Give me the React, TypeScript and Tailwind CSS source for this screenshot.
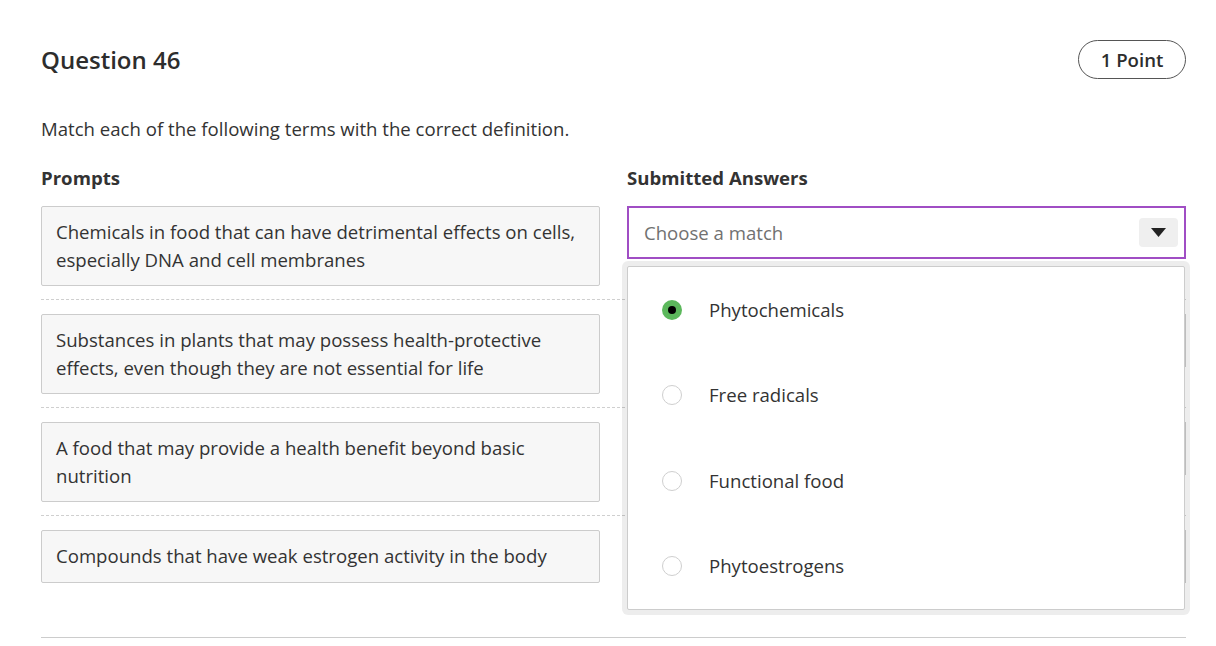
const prompts = [
  'Chemicals in food that can have detrimental effects on cells, especially DNA and cell membranes',
  'Substances in plants that may possess health-protective effects, even though they are not essential for life',
  'A food that may provide a health benefit beyond basic nutrition',
  'Compounds that have weak estrogen activity in the body',
]

const options = ['Phytochemicals', 'Free radicals', 'Functional food', 'Phytoestrogens']

function Arrow() {
  return (
    <span className="flex h-[29px] w-[39px] items-center justify-center rounded-sm bg-[#efefef]">
      <svg width="15" height="9" viewBox="0 0 15 9">
        <path d="M0 0 L15 0 L7.5 9 Z" fill="#222" />
      </svg>
    </span>
  )
}

function Select({ active, open }: { active?: boolean; open?: boolean }) {
  return (
    <div className="relative">
      <div
        className={
          active
            ? 'flex h-[53px] items-center justify-between border-2 border-[#a04ec4] bg-white pl-[15px] pr-[6px]'
            : 'flex h-[53px] items-center justify-between border border-[#cccccc] bg-white pl-[16px] pr-[7px]'
        }
      >
        <span className="text-[18.6px] text-[#717171]">Choose a match</span>
        <Arrow />
      </div>
      {open && (
        <div className="absolute left-0 right-[1px] top-[calc(100%+7px)] z-10 rounded-[2px] border border-[#cccccc] bg-white shadow-[0_0_0_5px_rgba(0,0,0,0.07)]">
          {options.map((o, i) => (
            <div key={o} className="flex h-[85.5px] items-center pl-[34px]">
              {i === 0 ? (
                <span className="flex h-[20px] w-[20px] items-center justify-center rounded-full bg-[#5cb85c]">
                  <span className="h-[8px] w-[8px] rounded-full bg-black" />
                </span>
              ) : (
                <span className="h-[20px] w-[20px] rounded-full border border-[#cfcfcf] bg-white" />
              )}
              <span className="ml-[27px] text-[18.6px] text-[#333]">{o}</span>
            </div>
          ))}
        </div>
      )}
    </div>
  )
}

export default function App() {
  return (
    <div className="min-h-[646px] bg-white pl-[41px] pr-[30px] pt-[40px] text-[#333] font-['Open_Sans',sans-serif]">
      <div className="flex h-[39px] items-center justify-between">
        <h2 className="text-[24px] font-semibold leading-8 text-[#2d2d2d]">Question 46</h2>
        <span className="flex h-[39px] w-[108px] items-center justify-center rounded-full border border-[#555] text-[18.6px] font-semibold text-[#2d2d2d]">
          1 Point
        </span>
      </div>
      <p className="mt-[36px] text-[18.6px] leading-7">
        Match each of the following terms with the correct definition.
      </p>
      <div className="mt-[21px] grid grid-cols-2 gap-x-[27px]">
        <div className="text-[18.6px] font-bold leading-7">Prompts</div>
        <div className="text-[18.6px] font-bold leading-7">Submitted Answers</div>
      </div>
      <div className="mt-[14px]">
        {prompts.map((p, i) => (
          <div
            key={i}
            className={
              i < prompts.length - 1
                ? 'grid grid-cols-2 gap-x-[27px] border-b border-dashed border-[#cfcfcf] pb-[13px] mb-[14px]'
                : 'grid grid-cols-2 gap-x-[27px]'
            }
          >
            <div className="rounded-[2px] border border-[#cccccc] bg-[#f7f7f7] px-[14px] py-[11px] text-[18.6px] leading-7">
              {p}
            </div>
            <div>
              <Select active={i === 0} open={i === 0} />
            </div>
          </div>
        ))}
      </div>
      <div className="mt-[54px] border-t border-[#cccccc]" />
    </div>
  )
}
